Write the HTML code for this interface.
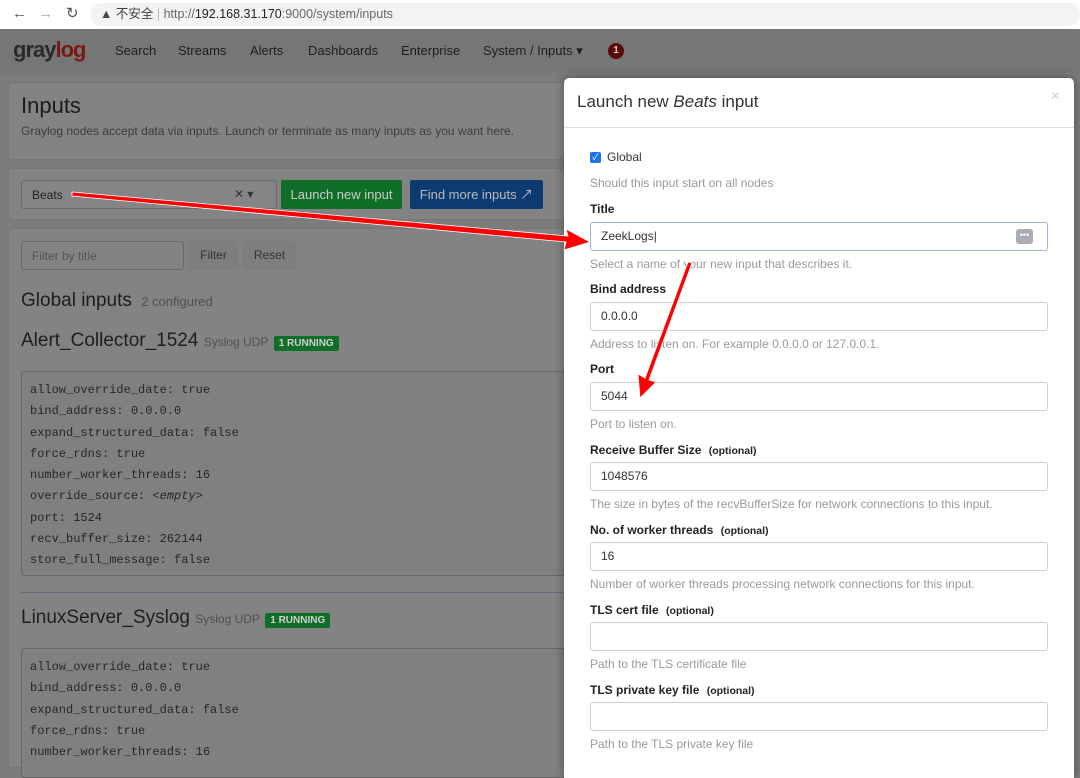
<!DOCTYPE html>
<html><head><meta charset="utf-8"><style>
*{box-sizing:border-box;margin:0;padding:0}
body{width:1080px;height:759px;overflow:hidden;position:relative;background:#7c7c7c;font-family:"Liberation Sans","Noto Sans CJK SC",sans-serif;}
.a{position:absolute}
.chrome{left:0;top:0;width:1080px;height:29px;background:#fff}
.url{left:90px;top:3px;width:990px;height:23px;background:#f1f3f4;border-radius:12px;font-size:12.5px;color:#202124;line-height:23px;padding-left:10px}
.nav{left:0;top:29px;width:1080px;height:44px;background:#767676;}
.nav .it{position:absolute;top:14px;font-size:13px;color:#1e1e1e}
.panel{background:#838383;border:1px solid #767676;border-radius:3px}
.cfg{background:#808080;border:1px solid #686868;border-radius:3px;font-family:"Liberation Mono",monospace;font-size:12px;color:#262626;padding:8px 8px;line-height:21.3px}
.badge{background:#0f6e27;color:#d0d0d0;font-size:10px;font-weight:bold;padding:2px 5px;border-radius:2px}
.modal{left:564px;top:78px;width:510px;height:700px;background:#fff;border-radius:5px 5px 0 0;box-shadow:0 0 10px rgba(0,0,0,.4)}
.lbl{position:absolute;left:26px;font-size:12px;font-weight:bold;color:#222}
.lbl i{font-style:normal;font-size:10.5px;margin-left:4px}
.inp{position:absolute;left:26px;width:458px;height:29px;border:1px solid #cfcfcf;border-radius:3px;font-size:12px;color:#333;padding-left:10px;line-height:27px}
.help{position:absolute;left:26px;font-size:12px;color:#9a9a9a}
</style></head><body>
<div class="a chrome"></div>
<div class="a" style="left:12px;top:5px;font-size:15px;color:#555">←</div>
<div class="a" style="left:38px;top:5px;font-size:15px;color:#aaa">→</div>
<div class="a" style="left:66px;top:4px;font-size:15px;color:#555">↻</div>
<div class="a url"><span style="color:#444">▲ 不安全</span> <span style="color:#bbb">|</span> <span style="color:#666">http://</span>192.168.31.170<span style="color:#666">:9000/system/inputs</span></div>
<div class="a nav">
<div class="a" style="left:13px;top:8px;font-size:22px;font-weight:bold;color:#2a2a2a;letter-spacing:-1px">gray<span style="color:#7a1818">log</span></div>
<div class="it" style="left:115px">Search</div><div class="it" style="left:178px">Streams</div><div class="it" style="left:250px">Alerts</div><div class="it" style="left:308px">Dashboards</div><div class="it" style="left:401px">Enterprise</div><div class="it" style="left:483px">System / Inputs ▾</div>
<div class="a" style="left:608px;top:14px;width:16px;height:16px;border-radius:8px;background:#5a0a0a;color:#ccc;font-size:10px;font-weight:bold;text-align:center;line-height:16px">1</div>
</div>
<div class="a panel" style="left:8px;top:82px;width:580px;height:78px"></div>
<div class="a" style="left:21px;top:93px;font-size:22px;color:#1c1c1c">Inputs</div>
<div class="a" style="left:21px;top:124px;font-size:12px;color:#3c3c3c">Graylog nodes accept data via inputs. Launch or terminate as many inputs as you want here.</div>
<div class="a panel" style="left:8px;top:168px;width:580px;height:52px"></div>
<div class="a" style="left:21px;top:180px;width:256px;height:29px;border:1px solid #6a6a6a;border-radius:3px;background:#858585;font-size:12px;color:#222;padding:7px 10px">Beats<span style="position:absolute;left:212px;top:6px;color:#333">✕ ▾</span></div>
<div class="a" style="left:281px;top:180px;width:121px;height:29px;background:#0f6e27;border-radius:2px;color:#ccc;font-size:13px;text-align:center;line-height:29px">Launch new input</div>
<div class="a" style="left:410px;top:180px;width:133px;height:29px;background:#0d3a70;border-radius:2px;color:#bbb;font-size:13px;text-align:center;line-height:29px">Find more inputs ↗</div>
<div class="a panel" style="left:8px;top:228px;width:580px;height:540px"></div>
<div class="a" style="left:21px;top:241px;width:163px;height:29px;border:1px solid #6a6a6a;border-radius:3px;font-size:12px;color:#555;padding:7px 10px">Filter by title</div>
<div class="a" style="left:188px;top:241px;width:51px;height:29px;background:#7e7e7e;border-radius:2px;font-size:12px;color:#333;text-align:center;line-height:29px">Filter</div>
<div class="a" style="left:243px;top:241px;width:53px;height:29px;background:#7e7e7e;border-radius:2px;font-size:12px;color:#333;text-align:center;line-height:29px">Reset</div>
<div class="a" style="left:21px;top:290px;font-size:19px;color:#1e1e1e">Global inputs <span style="font-size:13px;color:#505050;margin-left:4px">2 configured</span></div>
<div class="a" style="left:21px;top:330px;font-size:19px;color:#1e1e1e">Alert_Collector_1524 <span style="font-size:12px;color:#505050">Syslog UDP</span> <span class="badge">1 RUNNING</span></div>
<div class="a cfg" style="left:21px;top:371px;width:580px;height:205px">allow_override_date: true<br>bind_address: 0.0.0.0<br>expand_structured_data: false<br>force_rdns: true<br>number_worker_threads: 16<br>override_source: <i>&lt;empty&gt;</i><br>port: 1524<br>recv_buffer_size: 262144<br>store_full_message: false</div>
<div class="a" style="left:21px;top:592px;width:560px;height:1px;background:#6a6a80"></div>
<div class="a" style="left:21px;top:607px;font-size:19px;color:#1e1e1e">LinuxServer_Syslog <span style="font-size:12px;color:#505050">Syslog UDP</span> <span class="badge">1 RUNNING</span></div>
<div class="a cfg" style="left:21px;top:648px;width:580px;height:130px">allow_override_date: true<br>bind_address: 0.0.0.0<br>expand_structured_data: false<br>force_rdns: true<br>number_worker_threads: 16</div>

<div class="a modal">
<div class="a" style="left:13px;top:14px;font-size:17px;color:#333">Launch new <i>Beats</i> input</div>
<div class="a" style="right:14px;top:10px;font-size:16px;color:#ccc">×</div>
<div class="a" style="left:0;top:49px;width:510px;height:1px;background:#ddd"></div>
<div class="a" style="left:26px;top:74px;width:11px;height:11px;background:#1a73e8;border-radius:2px;color:#fff;font-size:9px;line-height:11px;text-align:center">✓</div>
<div class="a" style="left:43px;top:72px;font-size:12px;color:#333">Global</div>
<div class="help" style="top:98px">Should this input start on all nodes</div>
<div class="lbl" style="top:124px">Title</div>
<div class="inp" style="top:144px;border-color:#9bb7e0">ZeekLogs|<span style="position:absolute;right:14px;top:6px;width:17px;height:15px;background:#a8adb5;border-radius:3px;color:#fff;font-size:9px;line-height:13px;text-align:center">•••</span></div>
<div class="help" style="top:179px">Select a name of your new input that describes it.</div>
<div class="lbl" style="top:204px">Bind address</div>
<div class="inp" style="top:224px">0.0.0.0</div>
<div class="help" style="top:259px">Address to listen on. For example 0.0.0.0 or 127.0.0.1.</div>
<div class="lbl" style="top:284px">Port</div>
<div class="inp" style="top:304px">5044</div>
<div class="help" style="top:339px">Port to listen on.</div>
<div class="lbl" style="top:365px">Receive Buffer Size <i>(optional)</i></div>
<div class="inp" style="top:384px">1048576</div>
<div class="help" style="top:419px">The size in bytes of the recvBufferSize for network connections to this input.</div>
<div class="lbl" style="top:445px">No. of worker threads <i>(optional)</i></div>
<div class="inp" style="top:464px">16</div>
<div class="help" style="top:499px">Number of worker threads processing network connections for this input.</div>
<div class="lbl" style="top:525px">TLS cert file <i>(optional)</i></div>
<div class="inp" style="top:544px"></div>
<div class="help" style="top:579px">Path to the TLS certificate file</div>
<div class="lbl" style="top:605px">TLS private key file <i>(optional)</i></div>
<div class="inp" style="top:624px"></div>
<div class="help" style="top:659px">Path to the TLS private key file</div>
</div>

<svg class="a" style="left:0;top:0" width="1080" height="759">
<g fill="#f00" stroke="#fff" stroke-width="0.8">
<polygon points="72,192 568,236 566,229 590,242 564,250 566,242 72,196"/>
<polygon points="688,262 645,378 638,374 640,398 656,382 649,380 692,263"/>
</g>
</svg>
</body></html>
